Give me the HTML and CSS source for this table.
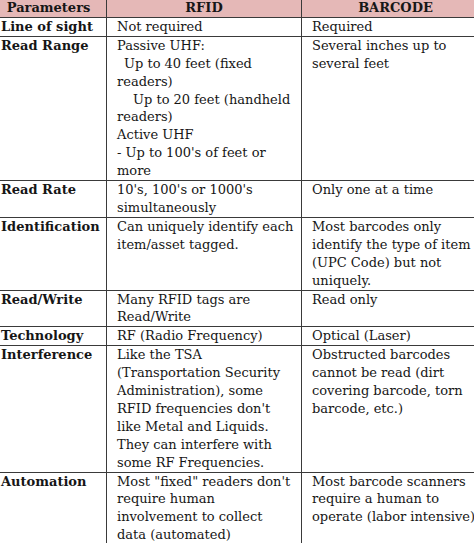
FILE: index.html
```html
<!DOCTYPE html>
<html lang="en">
<head>
<meta charset="utf-8">
<title>RFID vs Barcode</title>
<link rel="stylesheet" href="styles.css">
</head>
<body>
<table class="cmp">
  <colgroup>
    <col class="c1">
    <col class="c2">
    <col class="c3">
  </colgroup>
  <thead>
    <tr class="head">
      <th>Parameters</th>
      <th>RFID</th>
      <th>BARCODE</th>
    </tr>
  </thead>
  <tbody>
    <tr>
      <td class="param">Line of sight</td>
      <td>Not required</td>
      <td>Required</td>
    </tr>
    <tr>
      <td class="param">Read Range</td>
      <td>Passive UHF:<br><span class="ind1">Up to 40 feet (fixed</span><br>readers)<br><span class="ind2">Up to 20 feet (handheld</span><br>readers)<br>Active UHF<br>- Up to 100's of feet or<br>more</td>
      <td>Several inches up to<br>several feet</td>
    </tr>
    <tr>
      <td class="param">Read Rate</td>
      <td>10's, 100's or 1000's<br>simultaneously</td>
      <td>Only one at a time</td>
    </tr>
    <tr>
      <td class="param">Identification</td>
      <td>Can uniquely identify each<br>item/asset tagged.</td>
      <td>Most barcodes only<br>identify the type of item<br>(UPC Code) but not<br>uniquely.</td>
    </tr>
    <tr>
      <td class="param">Read/Write</td>
      <td>Many RFID tags are<br>Read/Write</td>
      <td>Read only</td>
    </tr>
    <tr>
      <td class="param">Technology</td>
      <td>RF (Radio Frequency)</td>
      <td>Optical (Laser)</td>
    </tr>
    <tr>
      <td class="param">Interference</td>
      <td>Like the TSA<br>(Transportation Security<br>Administration), some<br>RFID frequencies don't<br>like Metal and Liquids.<br>They can interfere with<br>some RF Frequencies.</td>
      <td>Obstructed barcodes<br>cannot be read (dirt<br>covering barcode, torn<br>barcode, etc.)</td>
    </tr>
    <tr>
      <td class="param">Automation</td>
      <td>Most "fixed" readers don't<br>require human<br>involvement to collect<br>data (automated)</td>
      <td>Most barcode scanners<br>require a human to<br>operate (labor intensive)</td>
    </tr>
  </tbody>
</table>
</body>
</html>
```
FILE: styles.css
```css
html, body {
  margin: 0;
  padding: 0;
  background: #ffffff;
}
body {
  width: 474px;
  height: 543px;
  overflow: hidden;
  font-family: "DejaVu Serif", "Liberation Serif", serif;
  font-size: 13px;
  line-height: 17.9px;
  color: #161616;
}
.cmp {
  border-collapse: collapse;
  table-layout: fixed;
  width: 499px;
  margin: -2px 0 0 -10px;
}
.c1 { width: 116px; }
.c2 { width: 195px; }
.c3 { width: 188px; }
.cmp th,
.cmp td {
  border: 1px solid #3a3a3a;
  padding: 0 4px 0 10px;
  vertical-align: top;
  text-align: left;
  white-space: nowrap;
  overflow: hidden;
}
.head th {
  background: #e5b8b7;
  font-weight: bold;
  text-align: center;
  padding: 0;
}
.param {
  font-weight: bold;
}
.ind1 { padding-left: 7px; }
.ind2 { padding-left: 16px; }
```
